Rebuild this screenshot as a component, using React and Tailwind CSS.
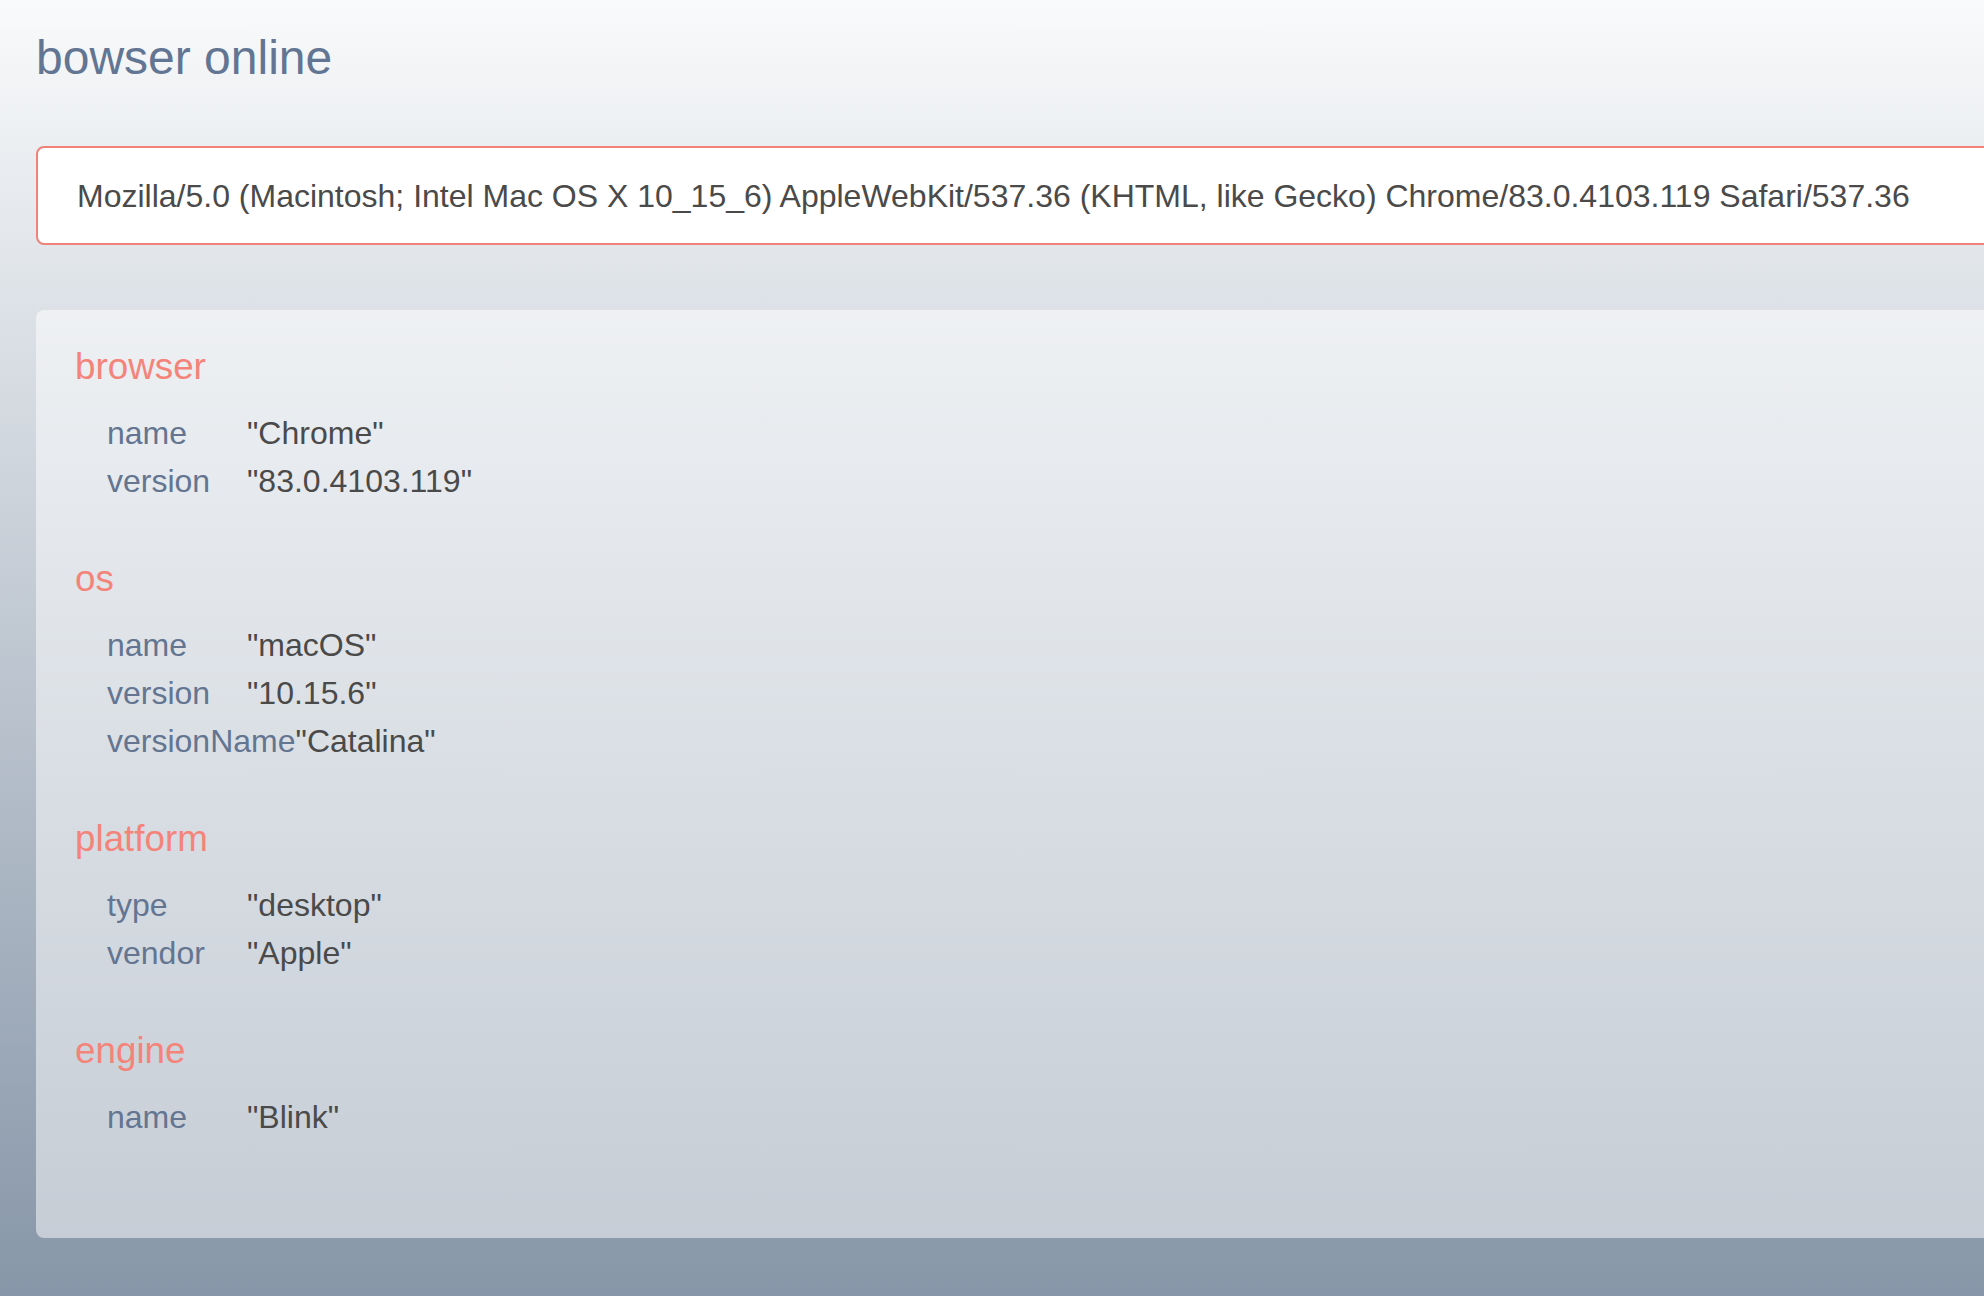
import React from "react";

const sections = [
  { title: "browser", rows: [["name", '"Chrome"'], ["version", '"83.0.4103.119"']] },
  { title: "os", rows: [["name", '"macOS"'], ["version", '"10.15.6"'], ["versionName", '"Catalina"']] },
  { title: "platform", rows: [["type", '"desktop"'], ["vendor", '"Apple"']] },
  { title: "engine", rows: [["name", '"Blink"']] },
];

export default function App() {
  return (
    <div
      className="min-h-screen w-screen overflow-hidden bg-gradient-to-b from-[#f9fafb] to-[#8796a8]"
      style={{ fontFamily: '"Liberation Sans", Arial, Helvetica, sans-serif' }}
    >
      <div className="w-[2100px] pl-[36px] pt-[22px]">
        <h1 className="text-[48px] leading-[72px] text-[#627592] font-normal">bowser online</h1>
        <div className="mt-[52px] h-[99px] flex items-center border-2 border-[#f0827a] rounded-[8px] bg-white pl-[39px] text-[32px] text-[#4a4a4a] whitespace-nowrap">
          Mozilla/5.0 (Macintosh; Intel Mac OS X 10_15_6) AppleWebKit/537.36 (KHTML, like Gecko) Chrome/83.0.4103.119 Safari/537.36
        </div>
        <div className="mt-[65px] rounded-[8px] bg-white/50 pt-[33px] pb-[97px] pl-[39px] flex flex-col gap-[50px]">
          {sections.map((s) => (
            <div key={s.title}>
              <h2 className="text-[36.8px] leading-[48px] text-[#f4847a] font-normal">{s.title}</h2>
              <div className="mt-[18px] pl-[32px]">
                {s.rows.map(([k, v]) => (
                  <div key={k} className="flex text-[32px] leading-[48px]">
                    <span className="min-w-[140px] text-[#637591]">{k}</span>
                    <span className="text-[#4a4a4a]">{v}</span>
                  </div>
                ))}
              </div>
            </div>
          ))}
        </div>
      </div>
    </div>
  );
}
